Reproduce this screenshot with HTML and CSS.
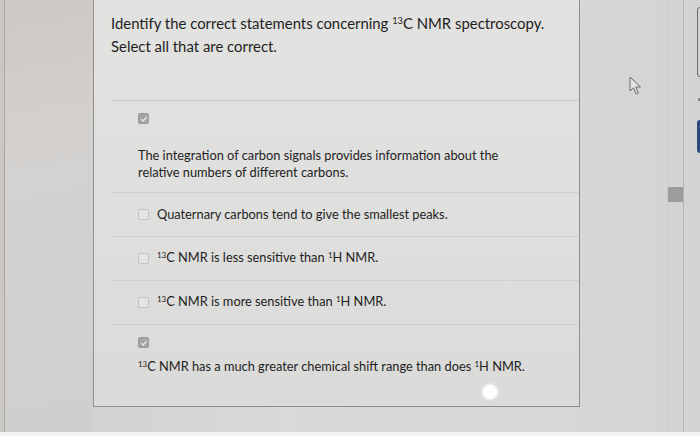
FILE: index.html
```html
<!DOCTYPE html>
<html>
<head>
<meta charset="utf-8">
<link rel="stylesheet" href="styles.css">
</head>
<body>
<div class="screen">
  <div class="gutter"></div>
  <div class="card">
    <div class="question">
      <p>Identify the correct statements concerning <sup>13</sup>C NMR spectroscopy.</p>
      <p>Select all that are correct.</p>
    </div>
    <div class="options">
      <div class="opt block">
        <span class="box checked"><svg viewBox="0 0 10 10" width="10" height="10"><path d="M2.5 5.2 L4.3 7 L7.6 3.2" fill="none" stroke="#e8e8e8" stroke-width="1.3"/></svg></span>
        <p class="opt-text">The integration of carbon signals provides information about the relative numbers of different carbons.</p>
      </div>
      <div class="opt inline">
        <span class="box"></span>
        <span class="opt-text">Quaternary carbons tend to give the smallest peaks.</span>
      </div>
      <div class="opt inline">
        <span class="box"></span>
        <span class="opt-text"><sup>13</sup>C NMR is less sensitive than <sup>1</sup>H NMR.</span>
      </div>
      <div class="opt inline">
        <span class="box"></span>
        <span class="opt-text"><sup>13</sup>C NMR is more sensitive than <sup>1</sup>H NMR.</span>
      </div>
      <div class="opt block last">
        <span class="box checked"><svg viewBox="0 0 10 10" width="10" height="10"><path d="M2.5 5.2 L4.3 7 L7.6 3.2" fill="none" stroke="#e8e8e8" stroke-width="1.3"/></svg></span>
        <p class="opt-text"><sup>13</sup>C NMR has a much greater chemical shift range than does <sup>1</sup>H NMR.</p>
      </div>
    </div>
    <span class="glare"></span>
  </div>
  <div class="side">
    <svg class="cursor" viewBox="0 0 13 20" width="13" height="20"><path d="M1 1 L1 15 L4.5 11.8 L7.2 18 L9.3 17 L6.8 11 L11.5 11 Z" fill="#e4e4e2" stroke="#6a6a6a" stroke-width="1" stroke-linejoin="round"/></svg>
    <div class="track"><div class="thumb"></div></div>
    <div class="edge">
      <div class="edge-box"></div>
      <div class="edge-dot"></div>
      <div class="edge-blue"></div>
    </div>
  </div>
</div>
<div class="bottom"></div>
</body>
</html>
```
FILE: styles.css
```css
html, body {
  margin: 0;
  padding: 0;
  width: 700px;
  height: 436px;
  overflow: hidden;
  font-family: Lato, "Open Sans", sans-serif;
  color: #1e1e1e;
}
.screen {
  display: flex;
  height: 432px;
  padding-left: 4px;
  box-sizing: border-box;
  background: linear-gradient(90deg, #cbc7c5 0%, #d3d1cf 10%, #d9d9d7 40%, #d7d7d5 80%, #d3d3d1 100%);
}
.gutter {
  width: 88px;
  border-left: 1px solid #a9a7a6;
  background: linear-gradient(170deg, #cdc8c6 0%, #d4d2d0 40%, #cfcfcd 100%);
}
.card {
  position: relative;
  width: 487px;
  height: 407px;
  border: 1px solid #8f8f8f;
  border-top: none;
  background: linear-gradient(180deg, #e2e2e0 0%, #dfdfdd 50%, #dadad8 100%);
  padding-left: 17px;
  box-sizing: border-box;
}
.question {
  padding-top: 13px;
  height: 87px;
  border-bottom: 1px solid #c6c6c4;
  font-size: 14.9px;
  line-height: 21px;
}
.question p { margin: 0; }
sup {
  font-size: 0.62em;
  vertical-align: 0;
  position: relative;
  top: -0.55em;
}
.options {
  font-size: 12.8px;
  line-height: 17px;
}
.opt {
  padding-left: 27px;
  border-bottom: 1px solid #cfcfcd;
  box-sizing: border-box;
}
.opt.block {
  height: 92px;
  padding-top: 12px;
}
.opt.block .opt-text {
  margin: 23px 0 0;
  width: 380px;
}
.opt.inline {
  height: 44px;
  display: flex;
  align-items: center;
  gap: 8px;
}
.opt.last {
  border-bottom: none;
  height: 80px;
  padding-top: 12px;
}
.opt.last .opt-text {
  margin-top: 10px;
  width: auto;
}
.box {
  display: block;
  width: 11px;
  height: 11px;
  border: 1px solid #c2c2c2;
  border-radius: 2px;
  background: #e4e4e4;
  box-sizing: border-box;
  flex: none;
}
.box.checked {
  background: #a4a4a4;
  border-color: #9a9a9a;
}
.box svg { display: block; margin: -0.5px; }
.glare {
  position: absolute;
  left: 389px;
  top: 385px;
  width: 14px;
  height: 14px;
  border-radius: 50%;
  background: #ffffff;
  box-shadow: 0 0 3px 1px rgba(255,255,255,0.8);
}
.side {
  position: relative;
  flex: 1;
  display: flex;
  justify-content: flex-end;
}
.cursor {
  position: absolute;
  left: 49px;
  top: 76px;
}
.track {
  width: 15px;
  margin-right: 12px;
  border-left: 1px solid #cdcdcb;
  border-right: 1px solid #b4b4b2;
  padding-top: 187px;
}
.thumb {
  width: 15px;
  height: 15px;
  background: #9c9c9a;
}
.edge {
  width: 4px;
  position: relative;
}
.edge-box {
  position: absolute;
  left: 1px;
  top: 7px;
  width: 6px;
  height: 70px;
  border: 1px solid #6b6b6b;
  border-radius: 3px;
  box-sizing: border-box;
}
.edge-dot {
  position: absolute;
  left: 2px;
  top: 98px;
  width: 3px;
  height: 3px;
  border-radius: 50%;
  background: #777;
}
.edge-blue {
  position: absolute;
  left: 1px;
  top: 120px;
  width: 6px;
  height: 33px;
  border-radius: 3px;
  background: #2c4a7a;
}
.bottom {
  height: 4px;
  background: #f2f2f2;
}
```
